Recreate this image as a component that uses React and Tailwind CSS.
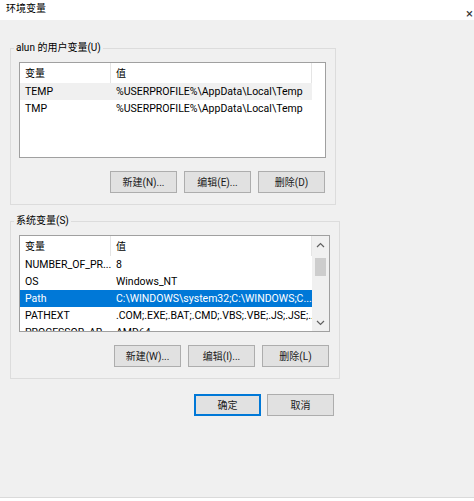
import React from "react";

const F = "font-['Roboto','Noto_Sans_CJK_SC',sans-serif]";

function Btn({ children, primary }) {
  return (
    <div
      className={
        "w-[67px] h-[22px] flex items-center justify-center bg-[#e1e1e1] text-[10px] text-[#1a1a1a] " +
        (primary ? "border-2 border-[#0078d7]" : "border border-[#adadad]")
      }
    >
      {children}
    </div>
  );
}

function Header() {
  return (
    <div className="flex h-[20px] items-center text-[10px] text-black">
      <div className="w-[91px] h-full flex items-center pl-[5px] border-r border-[#e5e5e5]">变量</div>
      <div className="w-[201px] h-full flex items-center pl-[5px] border-r border-[#e5e5e5]">值</div>
    </div>
  );
}

function Row({ name, value, state }) {
  const bg =
    state === "sel" ? "bg-[#0078d7] text-white" : state === "hover" ? "bg-[#f0f0f0] text-black" : "text-black";
  return (
    <div className={"flex h-[17px] items-center w-[292px] text-[10.5px] leading-[17px] " + bg}>
      <div className="w-[91px] pl-[5px] whitespace-nowrap overflow-hidden">{name}</div>
      <div className="w-[201px] pl-[5px] whitespace-nowrap overflow-hidden">{value}</div>
    </div>
  );
}

function Group({ label, children, className }) {
  return (
    <fieldset className={"ml-[10px] w-[326px] border border-[#dcdcdc] pl-[8px] pr-[9px] pt-[7px] " + className}>
      <legend className="ml-[-5px] px-[2px] text-[10px] leading-[14px] text-black">{label}</legend>
      {children}
    </fieldset>
  );
}

export default function App() {
  return (
    <div className={"w-[474px] h-[501px] flex flex-col bg-white " + F}>
      <div className="h-[20px] flex justify-between bg-white">
        <div className="pl-[6px] pt-[2px] text-[10px] leading-[14px] text-black">环境变量</div>
        <div className="self-end text-[13px] leading-[12px] text-[#333] mr-[1px]">×</div>
      </div>
      <div className="h-[478px] bg-[#f0f0f0] flex flex-col border-b border-[#dadada]">
        <Group label="alun 的用户变量(U)" className="mt-[21px] h-[164px]">
          <div className="h-[96px] border border-[#a0a0a0] bg-white">
            <Header />
            <Row name="TEMP" value="%USERPROFILE%\AppData\Local\Temp" state="hover" />
            <Row name="TMP" value="%USERPROFILE%\AppData\Local\Temp" />
          </div>
          <div className="mt-[13px] flex justify-end gap-[7px] pr-[1px]">
            <Btn>新建(N)...</Btn>
            <Btn>编辑(E)...</Btn>
            <Btn>删除(D)</Btn>
          </div>
        </Group>
        <Group label="系统变量(S)" className="mt-[9px] h-[165px]">
          <div className="h-[97px] border border-[#a0a0a0] bg-white flex overflow-hidden">
            <div className="flex-1 overflow-hidden">
              <Header />
              <Row name="NUMBER_OF_PR..." value="8" />
              <Row name="OS" value="Windows_NT" />
              <Row name="Path" value="C:\WINDOWS\system32;C:\WINDOWS;C..." state="sel" />
              <Row name="PATHEXT" value=".COM;.EXE;.BAT;.CMD;.VBS;.VBE;.JS;.JSE;..." />
              <Row name="PROCESSOR_AR..." value="AMD64" />
            </div>
            <div className="w-[17px] bg-[#f0f0f0] flex flex-col items-center">
              <div className="h-[17px] flex items-center justify-center">
                <svg width="9" height="6" viewBox="0 0 9 6">
                  <path d="M1 5 L4.5 1.5 L8 5" fill="none" stroke="#606060" strokeWidth="1.2" />
                </svg>
              </div>
              <div className="mt-[5px] w-[11px] h-[18px] bg-[#cdcdcd]" />
              <div className="flex-1" />
              <div className="h-[17px] flex items-center justify-center">
                <svg width="9" height="6" viewBox="0 0 9 6">
                  <path d="M1 1 L4.5 4.5 L8 1" fill="none" stroke="#606060" strokeWidth="1.2" />
                </svg>
              </div>
            </div>
          </div>
          <div className="mt-[13px] flex justify-end gap-[7px] pr-[1px]">
            <Btn>新建(W)...</Btn>
            <Btn>编辑(I)...</Btn>
            <Btn>删除(L)</Btn>
          </div>
        </Group>
        <div className="mt-[15px] ml-[194px] flex gap-[6px]">
          <Btn primary>确定</Btn>
          <div className="w-[68px]">
            <Btn>取消</Btn>
          </div>
        </div>
      </div>
    </div>
  );
}
